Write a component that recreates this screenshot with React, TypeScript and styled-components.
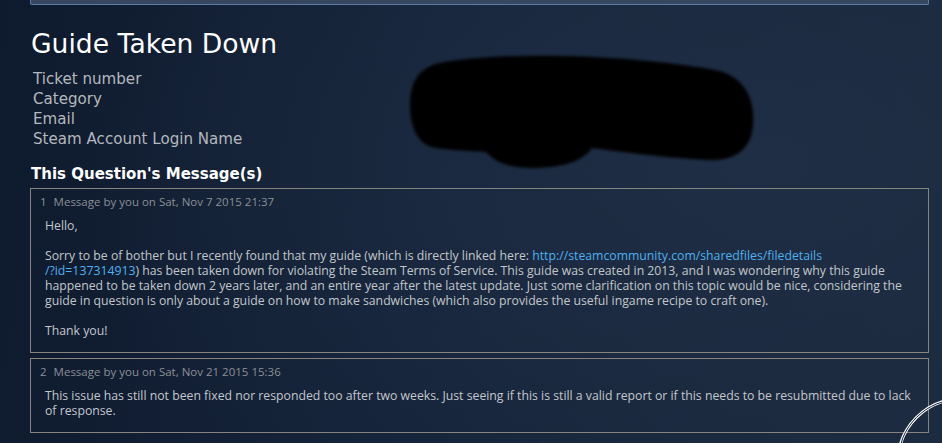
import React from "react";
import styled, { createGlobalStyle } from "styled-components";

const Global = createGlobalStyle`
  html, body { margin: 0; padding: 0; }
  body {
    width: 942px;
    height: 443px;
    overflow: hidden;
    background:
      radial-gradient(ellipse 700px 420px at 760px 160px, #1f2e44 0%, rgba(31,46,68,0) 100%),
      linear-gradient(100deg, #0e1a2d 0%, #15233a 45%, #1c2a3f 100%);
    font-family: "DejaVu Sans", Verdana, sans-serif;
  }
`;

const Page = styled.div`
  position: relative;
  width: 942px;
  height: 443px;
  overflow: hidden;
`;

const Column = styled.div`
  width: 899px;
  margin-left: 30px;
  display: flex;
  flex-direction: column;
`;

const TopBar = styled.div`
  height: 4px;
  background: #36475f;
  border: 1px solid #5a7ca8;
  border-top: none;
  border-radius: 0 0 2px 2px;
`;

const Title = styled.h1`
  margin: 22px 0 0 1px;
  font-family: "DejaVu Sans", Verdana, sans-serif;
  font-weight: normal;
  font-size: 26.6px;
  line-height: 34px;
  color: #ffffff;
`;

const Fields = styled.div`
  margin: 8px 0 0 3px;
  display: flex;
  flex-direction: column;
`;

const FieldLabel = styled.div`
  font-family: "DejaVu Sans", Verdana, sans-serif;
  font-size: 15.1px;
  line-height: 20px;
  color: #b4b8bc;
`;

const SectionTitle = styled.h2`
  margin: 15px 0 4px 1px;
  font-family: "DejaVu Sans", Verdana, sans-serif;
  font-weight: bold;
  font-size: 15px;
  line-height: 20px;
  color: #ffffff;
`;

const Messages = styled.div`
  display: flex;
  flex-direction: column;
  gap: 5px;
`;

const MessageBox = styled.div`
  border: 1px solid #87847f;
  padding: 5px 14px 14px 9px;
  display: flex;
  flex-direction: column;
`;

const MessageHeader = styled.div`
  font-family: "Open Sans", "Noto Sans", sans-serif;
  font-size: 11.5px;
  line-height: 15px;
  color: #8b9096;
  display: flex;
  gap: 7px;
`;

const MessageBody = styled.div`
  margin: 9px 0 0 5px;
  font-family: "Open Sans", "Noto Sans", sans-serif;
  font-size: 12.25px;
  line-height: 15px;
  color: #c2c7cc;
  p { margin: 0; }
  p + p { margin-top: 15px; }
`;

const Link = styled.a`
  color: #4fb0f0;
  text-decoration: none;
`;

const Redaction = styled.svg`
  position: absolute;
  left: 400px;
  top: 45px;
  width: 370px;
  height: 135px;
`;

const Ring = styled.svg`
  position: absolute;
  left: 880px;
  top: 380px;
  width: 62px;
  height: 63px;
`;

type Msg = { n: number; date: string; body: React.ReactNode };

const messages: Msg[] = [
  {
    n: 1,
    date: "Sat, Nov 7 2015 21:37",
    body: (
      <>
        <p>Hello,</p>
        <p>
          Sorry to be of bother but I recently found that my guide (which is directly linked here:{" "}
          <Link href="#">http://steamcommunity.com/sharedfiles/filedetails</Link>
          <br />
          <Link href="#">/?id=137314913</Link>) has been taken down for violating the Steam Terms of Service. This guide was created in 2013, and I was wondering why this guide happened to be taken down 2 years later, and an entire year after the latest update. Just some clarification on this topic would be nice, considering the guide in question is only about a guide on how to make sandwiches (which also provides the useful ingame recipe to craft one).
        </p>
        <p>Thank you!</p>
      </>
    ),
  },
  {
    n: 2,
    date: "Sat, Nov 21 2015 15:36",
    body: (
      <p>
        This issue has still not been fixed nor responded too after two weeks. Just seeing if this is still a valid report or if this needs to be resubmitted due to lack of response.
      </p>
    ),
  },
];

export default function App() {
  return (
    <Page>
      <Global />
      <Column>
        <TopBar />
        <Title>Guide Taken Down</Title>
        <Fields>
          <FieldLabel>Ticket number</FieldLabel>
          <FieldLabel>Category</FieldLabel>
          <FieldLabel>Email</FieldLabel>
          <FieldLabel>Steam Account Login Name</FieldLabel>
        </Fields>
        <SectionTitle>This Question's Message(s)</SectionTitle>
        <Messages>
          {messages.map((m) => (
            <MessageBox key={m.n}>
              <MessageHeader>
                <span>{m.n}</span>
                <span>Message by you on {m.date}</span>
              </MessageHeader>
              <MessageBody>{m.body}</MessageBody>
            </MessageBox>
          ))}
        </Messages>
      </Column>
      <Redaction viewBox="400 45 370 135">
        <defs>
          <filter id="soft" x="-10%" y="-10%" width="120%" height="120%">
            <feGaussianBlur stdDeviation="1.5" />
          </filter>
        </defs>
        <path
          filter="url(#soft)"
          fill="#000"
          d="M 440 63 C 470 57, 520 55, 560 56 C 620 57, 680 63, 720 71 C 746 79, 755 100, 753 125 C 751 150, 735 161, 708 160 C 668 158, 622 152, 592 148 C 582 162, 562 168, 530 168 C 505 167, 494 161, 486 152 C 468 151, 450 150, 436 148 C 417 145, 410 126, 410 105 C 410 81, 420 67, 440 63 Z"
        />
      </Redaction>
      <Ring viewBox="880 380 62 63">
        <circle cx="961" cy="462" r="63" fill="none" stroke="#ffffff" strokeWidth="3" />
        <circle cx="961" cy="462" r="63" fill="none" stroke="#1b2739" strokeWidth="1" />
      </Ring>
    </Page>
  );
}
